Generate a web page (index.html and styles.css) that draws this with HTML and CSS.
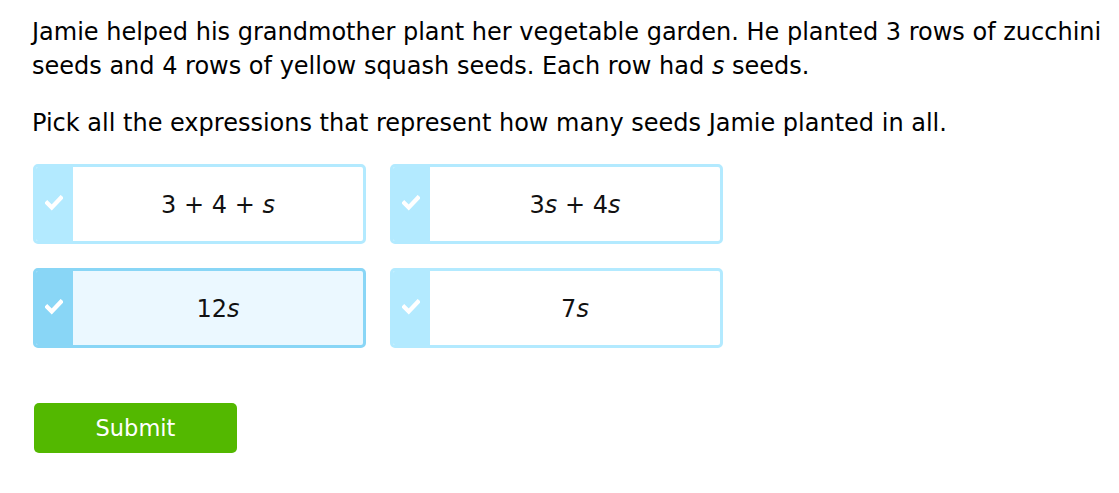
FILE: index.html
```html
<!DOCTYPE html>
<html>
<head>
<meta charset="utf-8">
<link rel="stylesheet" href="styles.css">
</head>
<body>
<div class="question">
  <p class="prompt intro">Jamie helped his grandmother plant her vegetable garden. He planted 3 rows of zucchini seeds and 4 rows of yellow squash seeds. Each row had <i>s</i> seeds.</p>
  <p class="prompt">Pick all the expressions that represent how many seeds Jamie planted in all.</p>
  <div class="choices">
    <div class="choice">
      <div class="strip"><svg class="check" viewBox="0 0 16 14"><path d="M2 7 L6 11 L14 2.5" fill="none" stroke="#fff" stroke-width="3.8" stroke-linecap="square"/></svg></div>
      <div class="label">3 + 4 + <i>s</i></div>
    </div>
    <div class="choice">
      <div class="strip"><svg class="check" viewBox="0 0 16 14"><path d="M2 7 L6 11 L14 2.5" fill="none" stroke="#fff" stroke-width="3.8" stroke-linecap="square"/></svg></div>
      <div class="label">3<i>s</i> + 4<i>s</i></div>
    </div>
    <div class="choice selected">
      <div class="strip"><svg class="check" viewBox="0 0 16 14"><path d="M2 7 L6 11 L14 2.5" fill="none" stroke="#fff" stroke-width="3.8" stroke-linecap="square"/></svg></div>
      <div class="label">12<i>s</i></div>
    </div>
    <div class="choice">
      <div class="strip"><svg class="check" viewBox="0 0 16 14"><path d="M2 7 L6 11 L14 2.5" fill="none" stroke="#fff" stroke-width="3.8" stroke-linecap="square"/></svg></div>
      <div class="label">7<i>s</i></div>
    </div>
  </div>
  <button class="submit">Submit</button>
</div>
</body>
</html>
```
FILE: styles.css
```css
html, body {
  margin: 0;
  padding: 0;
  background: #fff;
}
body {
  font-family: "DejaVu Sans", Verdana, sans-serif;
  color: #000;
  overflow: hidden;
}
.question {
  padding: 15px 0 0 32px;
  width: 1085px;
}
.prompt {
  margin: 0 0 22px 0;
  font-size: 24px;
  line-height: 34px;
}
.prompt.intro {
  margin-bottom: 23px;
}
.choices {
  display: grid;
  grid-template-columns: 333px 333px;
  column-gap: 24px;
  row-gap: 24px;
  margin-left: 1px;
  margin-top: 24px;
}
.choice {
  display: flex;
  height: 80px;
  box-sizing: border-box;
  border: 3px solid #b3eaff;
  border-radius: 5px;
  background: #fff;
  overflow: hidden;
}
.strip {
  width: 37px;
  background: #b3eaff;
  display: flex;
  align-items: center;
  justify-content: center;
}
.check {
  width: 18px;
  height: 16px;
  margin-left: -2px;
  margin-top: -2px;
}
.label {
  flex: 1;
  display: flex;
  align-items: center;
  justify-content: center;
  font-size: 24px;
  color: #111;
  white-space: pre;
  padding-top: 1px;
}
.choice.selected {
  border-color: #89d6f6;
  background: #ebf8ff;
}
.choice.selected .strip {
  background: #89d6f6;
}
.submit {
  display: block;
  margin-top: 55px;
  margin-left: 2px;
  width: 203px;
  height: 50px;
  border: none;
  border-radius: 5px;
  background: #53b800;
  color: #fff;
  font-family: "DejaVu Sans", Verdana, sans-serif;
  font-size: 22.5px;
  padding: 0;
}
```
